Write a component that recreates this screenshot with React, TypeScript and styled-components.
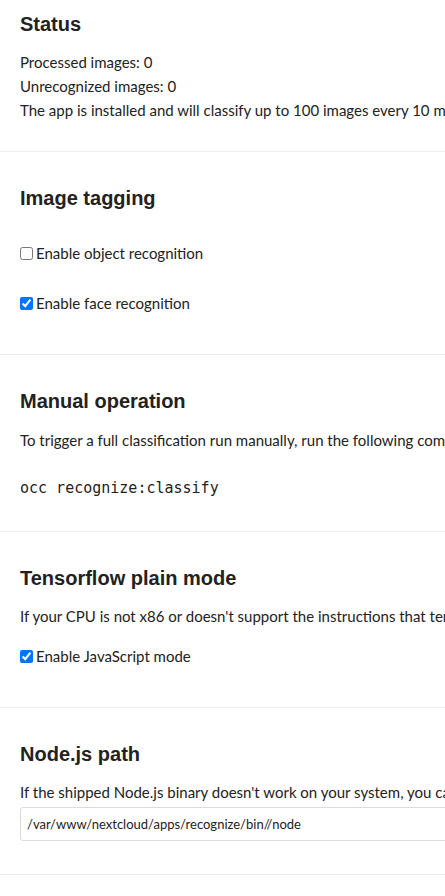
import React from "react";
import styled, { createGlobalStyle } from "styled-components";

const GlobalStyle = createGlobalStyle`
  html, body { margin: 0; padding: 0; background: #ffffff; }
  body {
    font-family: Lato, "Liberation Sans", sans-serif;
    font-size: 15px;
    color: #222222;
    overflow: hidden;
  }
`;

const Page = styled.main`
  display: flex;
  flex-direction: column;
  width: 100%;
`;

const Section = styled.section<{ $top?: number }>`
  display: flex;
  flex-direction: column;
  padding: ${(p) => p.$top ?? 29}px 20px 29px;
  border-bottom: 1px solid #ededed;
  white-space: nowrap;
  overflow: hidden;
`;

const Heading = styled.h2`
  margin: 2px 0 11px;
  font-family: "Liberation Sans", Arial, sans-serif;
  font-size: 20px;
  font-weight: bold;
  line-height: 30px;
  color: #222222;
`;

const Text = styled.p<{ $mt?: number; $mb?: number }>`
  margin: ${(p) => p.$mt ?? 0}px 0 ${(p) => p.$mb ?? 0}px;
  font-size: 15px;
  line-height: 24px;
  color: #222222;
`;

const Code = styled.pre`
  margin: 24px 0 2px;
  font-family: "DejaVu Sans Mono", "Liberation Mono", monospace;
  font-size: 15px;
  line-height: 24px;
  color: #222222;
`;

const CheckList = styled.div<{ $mt: number; $gap: number; $mb: number }>`
  display: flex;
  flex-direction: column;
  gap: ${(p) => p.$gap}px;
  margin: ${(p) => p.$mt}px 0 ${(p) => p.$mb}px;
`;

const CheckRow = styled.label`
  display: flex;
  align-items: center;
  height: 24px;
  font-size: 15px;
  line-height: 24px;
  color: #222222;
  cursor: pointer;
`;

const Box = styled.input.attrs({ type: "checkbox" })`
  width: 13px;
  height: 13px;
  margin: 0 3px 0 0;
  accent-color: #0075ff;
`;

const PathInput = styled.input`
  box-sizing: border-box;
  width: 100%;
  min-width: 620px;
  height: 34px;
  margin: 3px 0 4px;
  padding: 0 6px;
  border: 1px solid #dbdbdb;
  border-radius: 3px;
  background: #ffffff;
  font-family: Lato, "Liberation Sans", sans-serif;
  font-size: 13px;
  color: #222222;
  outline: none;
`;

export default function App() {
  return (
    <Page>
      <GlobalStyle />
      <Section $top={7}>
        <Heading>Status</Heading>
        <Text>Processed images: 0</Text>
        <Text>Unrecognized images: 0</Text>
        <Text>
          The app is installed and will classify up to 100 images every 10 minutes.
        </Text>
      </Section>

      <Section>
        <Heading>Image tagging</Heading>
        <CheckList $mt={17} $gap={26} $mb={10}>
          <CheckRow>
            <Box />
            Enable object recognition
          </CheckRow>
          <CheckRow>
            <Box defaultChecked />
            Enable face recognition
          </CheckRow>
        </CheckList>
      </Section>

      <Section>
        <Heading>Manual operation</Heading>
        <Text $mt={1}>
          To trigger a full classification run manually, run the following command on the terminal.
        </Text>
        <Code>occ recognize:classify</Code>
      </Section>

      <Section>
        <Heading>Tensorflow plain mode</Heading>
        <Text>
          If your CPU is not x86 or doesn't support the instructions that tensorflow requires, you can enable JavaScript mode.
        </Text>
        <CheckList $mt={16} $gap={0} $mb={10}>
          <CheckRow>
            <Box defaultChecked />
            Enable JavaScript mode
          </CheckRow>
        </CheckList>
      </Section>

      <Section>
        <Heading>Node.js path</Heading>
        <Text>
          If the shipped Node.js binary doesn't work on your system, you can set the path to a custom node.js binary.
        </Text>
        <PathInput defaultValue="/var/www/nextcloud/apps/recognize/bin//node" />
      </Section>
    </Page>
  );
}
